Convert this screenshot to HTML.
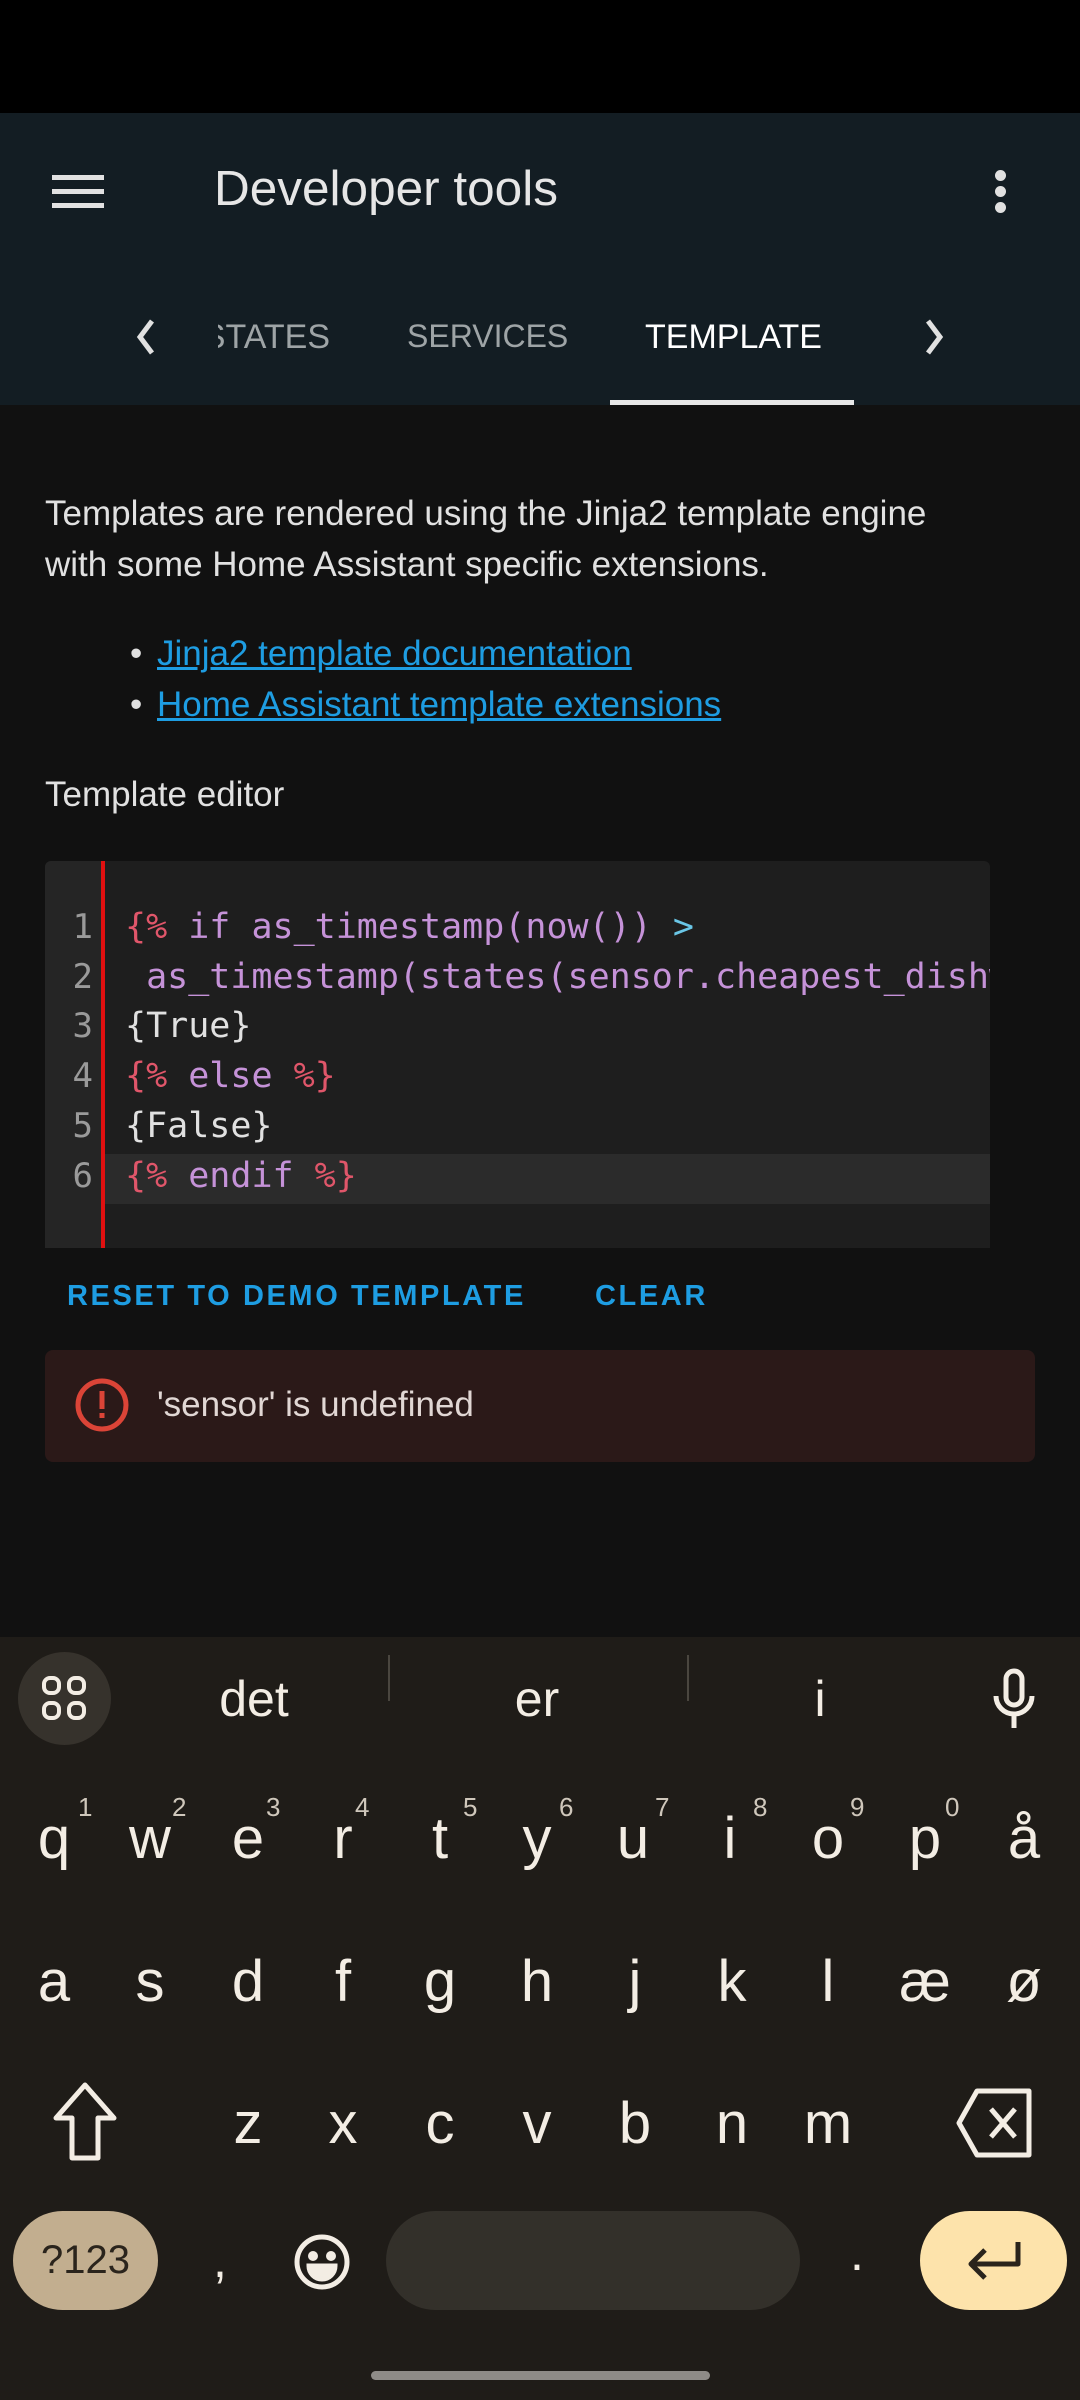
<!DOCTYPE html>
<html><head><meta charset="utf-8"><style>
*{margin:0;padding:0;box-sizing:border-box}
body{width:1080px;height:2400px;background:#111;position:relative;overflow:hidden;font-family:"Liberation Sans",sans-serif;color:#e1e1e1}
.a{position:absolute;white-space:nowrap}
.mono{font-family:"DejaVu Sans Mono","Liberation Mono",monospace}
.k{position:absolute;color:#f3ede4;font-size:58px;transform:translateX(-50%);line-height:1}
.s{position:absolute;color:#cfc7bb;font-size:26px;line-height:1}
</style></head><body>
<div class="a" style="left:0;top:0;width:1080px;height:113px;background:#000"></div>
<div class="a" style="left:0;top:113px;width:1080px;height:292px;background:#131d23"></div>
<div class="a" style="left:52px;top:175px;width:52px;height:5px;background:#e1e1e1"></div>
<div class="a" style="left:52px;top:189px;width:52px;height:5px;background:#e1e1e1"></div>
<div class="a" style="left:52px;top:203px;width:52px;height:5px;background:#e1e1e1"></div>
<div class="a" style="left:214px;top:160px;font-size:49.5px;color:#e6e6e6">Developer tools</div>
<div class="a" style="left:995px;top:170px;width:11px;height:11px;border-radius:50%;background:#e1e1e1"></div>
<div class="a" style="left:995px;top:186px;width:11px;height:11px;border-radius:50%;background:#e1e1e1"></div>
<div class="a" style="left:995px;top:202px;width:11px;height:11px;border-radius:50%;background:#e1e1e1"></div>
<svg class="a" style="left:130px;top:315px" width="32" height="44" viewBox="0 0 32 44"><path d="M22 6 L10 22 L22 38" stroke="#e1e1e1" stroke-width="5" fill="none"/></svg>
<svg class="a" style="left:918px;top:315px" width="32" height="44" viewBox="0 0 32 44"><path d="M10 6 L22 22 L10 38" stroke="#e1e1e1" stroke-width="5" fill="none"/></svg>
<div class="a" style="left:218px;top:318px;font-size:34px;color:#9ea4a6;width:112px;overflow:hidden;direction:rtl">STATES</div>
<div class="a" style="left:407px;top:318px;font-size:32px;color:#9ea4a6">SERVICES</div>
<div class="a" style="left:645px;top:318px;font-size:34px;color:#fff">TEMPLATE</div>
<div class="a" style="left:610px;top:400px;width:244px;height:5px;background:#e8e8e8"></div>
<div class="a" style="left:45px;top:488px;font-size:35px;line-height:51px;color:#e1e1e1">Templates are rendered using the Jinja2 template engine<br>with some Home Assistant specific extensions.</div>
<div class="a" style="left:130px;top:628px;font-size:35px;line-height:51px;color:#e1e1e1">•<br>•</div>
<div class="a" style="left:157px;top:628px;font-size:35px;line-height:51px;color:#1e9de2;text-decoration:underline">Jinja2 template documentation<br>Home Assistant template extensions</div>
<div class="a" style="left:45px;top:775px;font-size:35px;color:#e1e1e1">Template editor</div>
<div class="a" style="left:45px;top:861px;width:945px;height:387px;background:#1e1e1e;border-radius:6px 6px 0 0;overflow:hidden">
 <div class="a" style="left:0;top:0;width:56px;height:387px;background:#252525"></div>
 <div class="a" style="left:56px;top:0;width:4px;height:387px;background:#e01010"></div>
 <div class="a" style="left:60px;top:293px;width:900px;height:50px;background:#2b2b2b"></div>
 <div class="a mono" style="left:0;top:42px;width:48px;text-align:right;font-size:34px;line-height:49.7px;color:#9a9a9a">1<br>2<br>3<br>4<br>5<br>6</div>
 <div class="a mono" style="left:80px;top:42px;font-size:35px;line-height:49.7px;color:#e1e1e1"><span style="color:#e0566a">{%</span> <span style="color:#c592d8">if as_timestamp(now())</span> <span style="color:#6ac6e6">&gt;</span><br><span style="color:#c592d8">&nbsp;as_timestamp(states(sensor.cheapest_dishwasher</span><br>{True}<br><span style="color:#e0566a">{%</span> <span style="color:#c592d8">else</span> <span style="color:#e0566a">%}</span><br>{False}<br><span style="color:#e0566a">{%</span> <span style="color:#c592d8">endif</span> <span style="color:#e0566a">%}</span></div>
</div>
<div class="a" style="left:67px;top:1280px;font-size:29px;font-weight:bold;letter-spacing:2.6px;color:#1e9de2">RESET TO DEMO TEMPLATE</div>
<div class="a" style="left:595px;top:1280px;font-size:29px;font-weight:bold;letter-spacing:2.6px;color:#1e9de2">CLEAR</div>
<div class="a" style="left:45px;top:1350px;width:990px;height:112px;background:#2b1918;border-radius:8px"></div>
<svg class="a" style="left:74px;top:1377px" width="56" height="56" viewBox="0 0 56 56"><circle cx="28" cy="28" r="24" stroke="#db4437" stroke-width="5" fill="none"/><rect x="25.5" y="14" width="5" height="18" fill="#db4437"/><rect x="25.5" y="36" width="5" height="5" fill="#db4437"/></svg>
<div class="a" style="left:157px;top:1385px;font-size:35px;color:#e1d7d4">'sensor' is undefined</div>
<div class="a" style="left:0;top:1637px;width:1080px;height:763px;background:#1f1c18"></div>
<div class="a" style="left:18px;top:1652px;width:93px;height:93px;border-radius:50%;background:#36322c"></div>
<svg class="a" style="left:40px;top:1674px" width="48" height="48" viewBox="0 0 48 48" fill="none" stroke="#f3ede4" stroke-width="4"><rect x="4" y="4" width="15" height="15" rx="6"/><rect x="29" y="4" width="15" height="15" rx="6"/><rect x="4" y="29" width="15" height="15" rx="6"/><rect x="29" y="29" width="15" height="15" rx="6"/></svg>
<div class="k" style="left:254px;top:1674px;font-size:50px">det</div>
<div class="k" style="left:537px;top:1674px;font-size:50px">er</div>
<div class="k" style="left:820px;top:1674px;font-size:50px">i</div>
<div class="a" style="left:388px;top:1655px;width:2px;height:46px;background:#4a463f"></div>
<div class="a" style="left:687px;top:1655px;width:2px;height:46px;background:#4a463f"></div>
<svg class="a" style="left:990px;top:1668px" width="48" height="62" viewBox="0 0 48 62" fill="none" stroke="#f3ede4" stroke-width="5"><rect x="16" y="3" width="16" height="34" rx="8"/><path d="M6 28 a18 18 0 0 0 36 0 M24 46 V60"/></svg>
<div class="k" style="left:54px;top:1810px">q</div><div class="s" style="left:78px;top:1794px">1</div>
<div class="k" style="left:150px;top:1810px">w</div><div class="s" style="left:172px;top:1794px">2</div>
<div class="k" style="left:248px;top:1810px">e</div><div class="s" style="left:266px;top:1794px">3</div>
<div class="k" style="left:343px;top:1810px">r</div><div class="s" style="left:355px;top:1794px">4</div>
<div class="k" style="left:440px;top:1810px">t</div><div class="s" style="left:463px;top:1794px">5</div>
<div class="k" style="left:537px;top:1810px">y</div><div class="s" style="left:559px;top:1794px">6</div>
<div class="k" style="left:633px;top:1810px">u</div><div class="s" style="left:655px;top:1794px">7</div>
<div class="k" style="left:730px;top:1810px">i</div><div class="s" style="left:753px;top:1794px">8</div>
<div class="k" style="left:828px;top:1810px">o</div><div class="s" style="left:850px;top:1794px">9</div>
<div class="k" style="left:925px;top:1810px">p</div><div class="s" style="left:945px;top:1794px">0</div>
<div class="k" style="left:1024px;top:1810px">å</div>
<div class="k" style="left:54px;top:1953px">a</div>
<div class="k" style="left:150px;top:1953px">s</div>
<div class="k" style="left:248px;top:1953px">d</div>
<div class="k" style="left:343px;top:1953px">f</div>
<div class="k" style="left:440px;top:1953px">g</div>
<div class="k" style="left:537px;top:1953px">h</div>
<div class="k" style="left:635px;top:1953px">j</div>
<div class="k" style="left:732px;top:1953px">k</div>
<div class="k" style="left:828px;top:1953px">l</div>
<div class="k" style="left:925px;top:1953px">æ</div>
<div class="k" style="left:1024px;top:1953px">ø</div>
<svg class="a" style="left:50px;top:2080px" width="70" height="84" viewBox="0 0 70 84" fill="none" stroke="#f3ede4" stroke-width="5" stroke-linejoin="round"><path d="M35 5 L64 38 H48 V78 H22 V38 H6 Z"/></svg>
<div class="k" style="left:248px;top:2095px">z</div>
<div class="k" style="left:343px;top:2095px">x</div>
<div class="k" style="left:440px;top:2095px">c</div>
<div class="k" style="left:537px;top:2095px">v</div>
<div class="k" style="left:635px;top:2095px">b</div>
<div class="k" style="left:732px;top:2095px">n</div>
<div class="k" style="left:828px;top:2095px">m</div>
<svg class="a" style="left:955px;top:2087px" width="80" height="72" viewBox="0 0 80 72" fill="none" stroke="#f3ede4" stroke-width="5" stroke-linejoin="round"><path d="M22 4 H74 V68 H22 L4 36 Z"/><path d="M36 22 L60 50 M60 22 L36 50"/></svg>
<div class="a" style="left:13px;top:2211px;width:145px;height:99px;border-radius:50px;background:#c2ae8f"></div>
<div class="a" style="left:13px;top:2238px;width:145px;text-align:center;font-size:40px;color:#2a241c">?123</div>
<div class="k" style="left:220px;top:2235px;font-size:50px">,</div>
<svg class="a" style="left:293px;top:2233px" width="58" height="58" viewBox="0 0 58 58" fill="none" stroke="#f3ede4" stroke-width="5"><circle cx="29" cy="29" r="25"/><circle cx="20" cy="23" r="2.5" fill="#f3ede4"/><circle cx="38" cy="23" r="2.5" fill="#f3ede4"/><path d="M16 33 H42 A13 13 0 0 1 16 33 Z" fill="#f3ede4"/></svg>
<div class="a" style="left:386px;top:2211px;width:414px;height:99px;border-radius:50px;background:#33302a"></div>
<div class="k" style="left:857px;top:2228px;font-size:50px">.</div>
<div class="a" style="left:920px;top:2211px;width:147px;height:99px;border-radius:50px;background:#fde3ab"></div>
<svg class="a" style="left:963px;top:2238px" width="62" height="46" viewBox="0 0 62 46" fill="none" stroke="#2a241c" stroke-width="5" stroke-linejoin="round"><path d="M55 4 V26 H8 M22 12 L8 26 L22 40"/></svg>
<div class="a" style="left:371px;top:2371px;width:339px;height:9px;border-radius:5px;background:#8e8b87"></div>
</body></html>
